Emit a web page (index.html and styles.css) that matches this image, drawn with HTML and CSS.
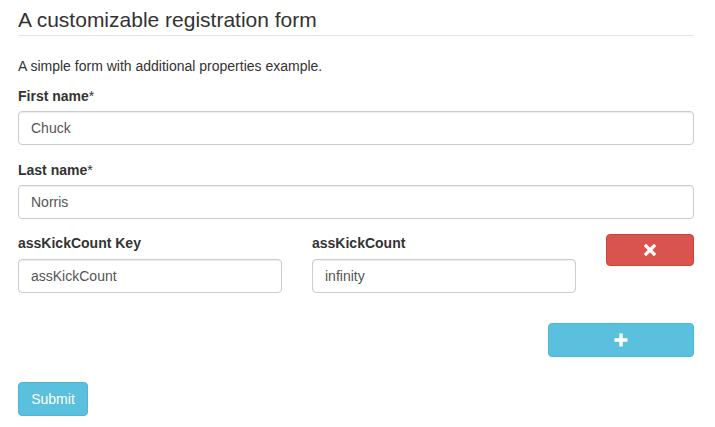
FILE: index.html
```html
<!DOCTYPE html>
<html>
<head>
<meta charset="utf-8">
<link rel="stylesheet" href="styles.css">
</head>
<body>
<form class="form">
  <fieldset class="fieldset">
    <legend class="legend">A customizable registration form</legend>
    <p class="desc">A simple form with additional properties example.</p>
    <div class="group">
      <label class="label">First name<span class="req">*</span></label>
      <input class="input" type="text" value="Chuck">
    </div>
    <div class="group">
      <label class="label">Last name<span class="req">*</span></label>
      <input class="input" type="text" value="Norris">
    </div>
    <div class="addrow">
      <div class="col5">
        <label class="label">assKickCount Key</label>
        <input class="input" type="text" value="assKickCount">
      </div>
      <div class="col5">
        <label class="label">assKickCount</label>
        <input class="input" type="text" value="infinity">
      </div>
      <div class="col2">
        <button type="button" class="btn btn-danger btn-remove">
          <svg width="12" height="12" viewBox="0 0 12 12"><path d="M2 2 L10 10 M10 2 L2 10" stroke="#fff" stroke-width="3.2" stroke-linecap="square"/></svg>
        </button>
      </div>
    </div>
    <div class="addwrap">
      <button type="button" class="btn btn-info btn-add">
        <svg width="14" height="14" viewBox="0 0 14 14"><path d="M7 0.5 V13.5 M0.5 7 H13.5" stroke="#fff" stroke-width="3.4"/></svg>
      </button>
    </div>
  </fieldset>
  <div class="actions">
    <button type="submit" class="btn btn-info btn-submit">Submit</button>
  </div>
</form>
</body>
</html>
```
FILE: styles.css
```css
* { box-sizing: border-box; }
html, body { margin: 0; padding: 0; background: #fff; }
body {
  font-family: "Liberation Sans", Arial, Helvetica, sans-serif;
  font-size: 14px;
  line-height: 20px;
  color: #333;
}
.form { padding: 5px 21px 0 18px; }
.fieldset { border: 0; margin: 0; padding: 0; min-width: 0; }
.legend {
  display: block;
  width: 100%;
  padding: 0;
  margin: 0 0 20px;
  font-size: 21px;
  line-height: 30px;
  color: #333;
  border-bottom: 1px solid #e5e5e5;
}
.desc { margin: 0 0 10px; }
.group { margin-bottom: 15px; }
.label {
  display: block;
  font-weight: bold;
  margin-bottom: 5px;
  max-width: 100%;
}
.req { font-weight: normal; }
.input {
  display: block;
  width: 100%;
  height: 34px;
  padding: 6px 12px;
  font-family: inherit;
  font-size: 14px;
  line-height: 20px;
  color: #555;
  background: #fff;
  border: 1px solid #ccc;
  border-radius: 4px;
  box-shadow: inset 0 1px 1px rgba(0,0,0,0.075);
  outline: none;
}
.addrow {
  display: grid;
  grid-template-columns: 264px 264px 88px;
  column-gap: 30px;
  margin-bottom: 30px;
}
.addrow .label { margin-top: -1px; margin-bottom: 6px; }
.col2 { display: flex; justify-content: flex-end; }
.btn {
  display: inline-flex;
  align-items: center;
  justify-content: center;
  font-family: inherit;
  font-size: 14px;
  line-height: 20px;
  border: 1px solid transparent;
  border-radius: 4px;
  color: #fff;
  padding: 6px 12px;
  cursor: pointer;
}
.btn-danger { background: #d9534f; border-color: #d43f3a; }
.btn-info { background: #5bc0de; border-color: #46b8da; }
.btn-remove { width: 88px; height: 32px; padding: 0; }
.addwrap { display: flex; justify-content: flex-end; margin-bottom: 25px; }
.btn-add { width: 146px; height: 34px; padding: 0; }
.btn-submit { width: 70px; height: 34px; padding: 6px 12px; }
.actions { display: flex; }
```
